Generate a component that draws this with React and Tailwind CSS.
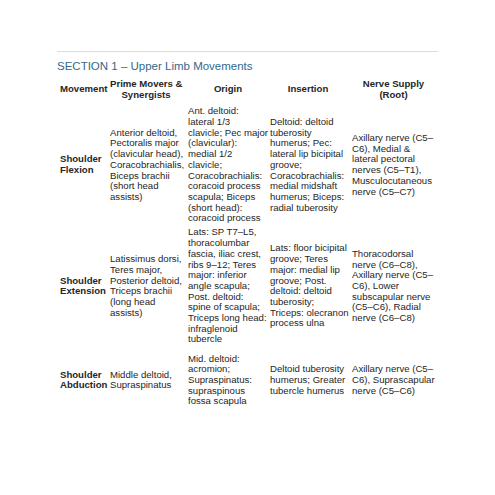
const rows = [
  {
    move: ["Shoulder", "Flexion"],
    prime: ["Anterior deltoid,", "Pectoralis major", "(clavicular head),", "Coracobrachialis,", "Biceps brachii", "(short head", "assists)"],
    origin: ["Ant. deltoid:", "lateral 1/3", "clavicle; Pec major", "(clavicular):", "medial 1/2", "clavicle;", "Coracobrachialis:", "coracoid process", "scapula; Biceps", "(short head):", "coracoid process"],
    insertion: ["Deltoid: deltoid", "tuberosity", "humerus; Pec:", "lateral lip bicipital", "groove;", "Coracobrachialis:", "medial midshaft", "humerus; Biceps:", "radial tuberosity"],
    nerve: ["Axillary nerve (C5–", "C6), Medial &", "lateral pectoral", "nerves (C5–T1),", "Musculocutaneous", "nerve (C5–C7)"],
    pad: "mt-[6.6px]",
  },
  {
    move: ["Shoulder", "Extension"],
    prime: ["Latissimus dorsi,", "Teres major,", "Posterior deltoid,", "Triceps brachii", "(long head", "assists)"],
    origin: ["Lats: SP T7–L5,", "thoracolumbar", "fascia, iliac crest,", "ribs 9–12; Teres", "major: inferior", "angle scapula;", "Post. deltoid:", "spine of scapula;", "Triceps long head:", "infraglenoid", "tubercle"],
    insertion: ["Lats: floor bicipital", "groove; Teres", "major: medial lip", "groove; Post.", "deltoid: deltoid", "tuberosity;", "Triceps: olecranon", "process ulna"],
    nerve: ["Thoracodorsal", "nerve (C6–C8),", "Axillary nerve (C5–", "C6), Lower", "subscapular nerve", "(C5–C6), Radial", "nerve (C6–C8)"],
    pad: "mt-[3.4px]",
  },
  {
    move: ["Shoulder", "Abduction"],
    prime: ["Middle deltoid,", "Supraspinatus"],
    origin: ["Mid. deltoid:", "acromion;", "Supraspinatus:", "supraspinous", "fossa scapula"],
    insertion: ["Deltoid tuberosity", "humerus; Greater", "tubercle humerus"],
    nerve: ["Axillary nerve (C5–", "C6), Suprascapular", "nerve (C5–C6)"],
    pad: "mt-[8.4px]",
  },
];

const Lines = ({ items }) => (
  <div>
    {items.map((t, i) => (
      <div key={i} className="whitespace-nowrap">{t}</div>
    ))}
  </div>
);

export default function App() {
  return (
    <div
      className="w-[495px] h-[495px] bg-white pt-[51px] pl-[57px] text-[#262626]"
      style={{ fontFamily: '"Liberation Sans", Arial, sans-serif' }}
    >
      <div className="w-[381px] h-px bg-[#dcdcdc]" />
      <h1 className="mt-[6px] text-[11.5px] leading-[16px] text-[#35698a]">
        SECTION 1 – Upper Limb Movements
      </h1>

      <div className="mt-[3.7px] flex items-center text-[9.6px] leading-[11px] font-bold text-center whitespace-nowrap">
        <div className="w-[50px] px-[3px] text-left">Movement</div>
        <div className="w-[78px] px-[3px]">Prime Movers &amp;<br />Synergists</div>
        <div className="w-[82px] px-[3px] pl-[7px]">Origin</div>
        <div className="w-[82px] px-[3px]">Insertion</div>
        <div className="w-[89px] px-[3px]">Nerve Supply<br />(Root)</div>
      </div>

      {rows.map((r, i) => (
        <div key={i} className={`${r.pad} flex items-center text-[9.6px] leading-[10.7px]`}>
          <div className="w-[50px] px-[3px] font-bold">
            <Lines items={r.move} />
          </div>
          <div className="w-[78px] px-[3px]">
            <Lines items={r.prime} />
          </div>
          <div className="w-[82px] px-[3px]">
            <Lines items={r.origin} />
          </div>
          <div className="w-[82px] px-[3px]">
            <Lines items={r.insertion} />
          </div>
          <div className="w-[89px] px-[3px]">
            <Lines items={r.nerve} />
          </div>
        </div>
      ))}
    </div>
  );
}
